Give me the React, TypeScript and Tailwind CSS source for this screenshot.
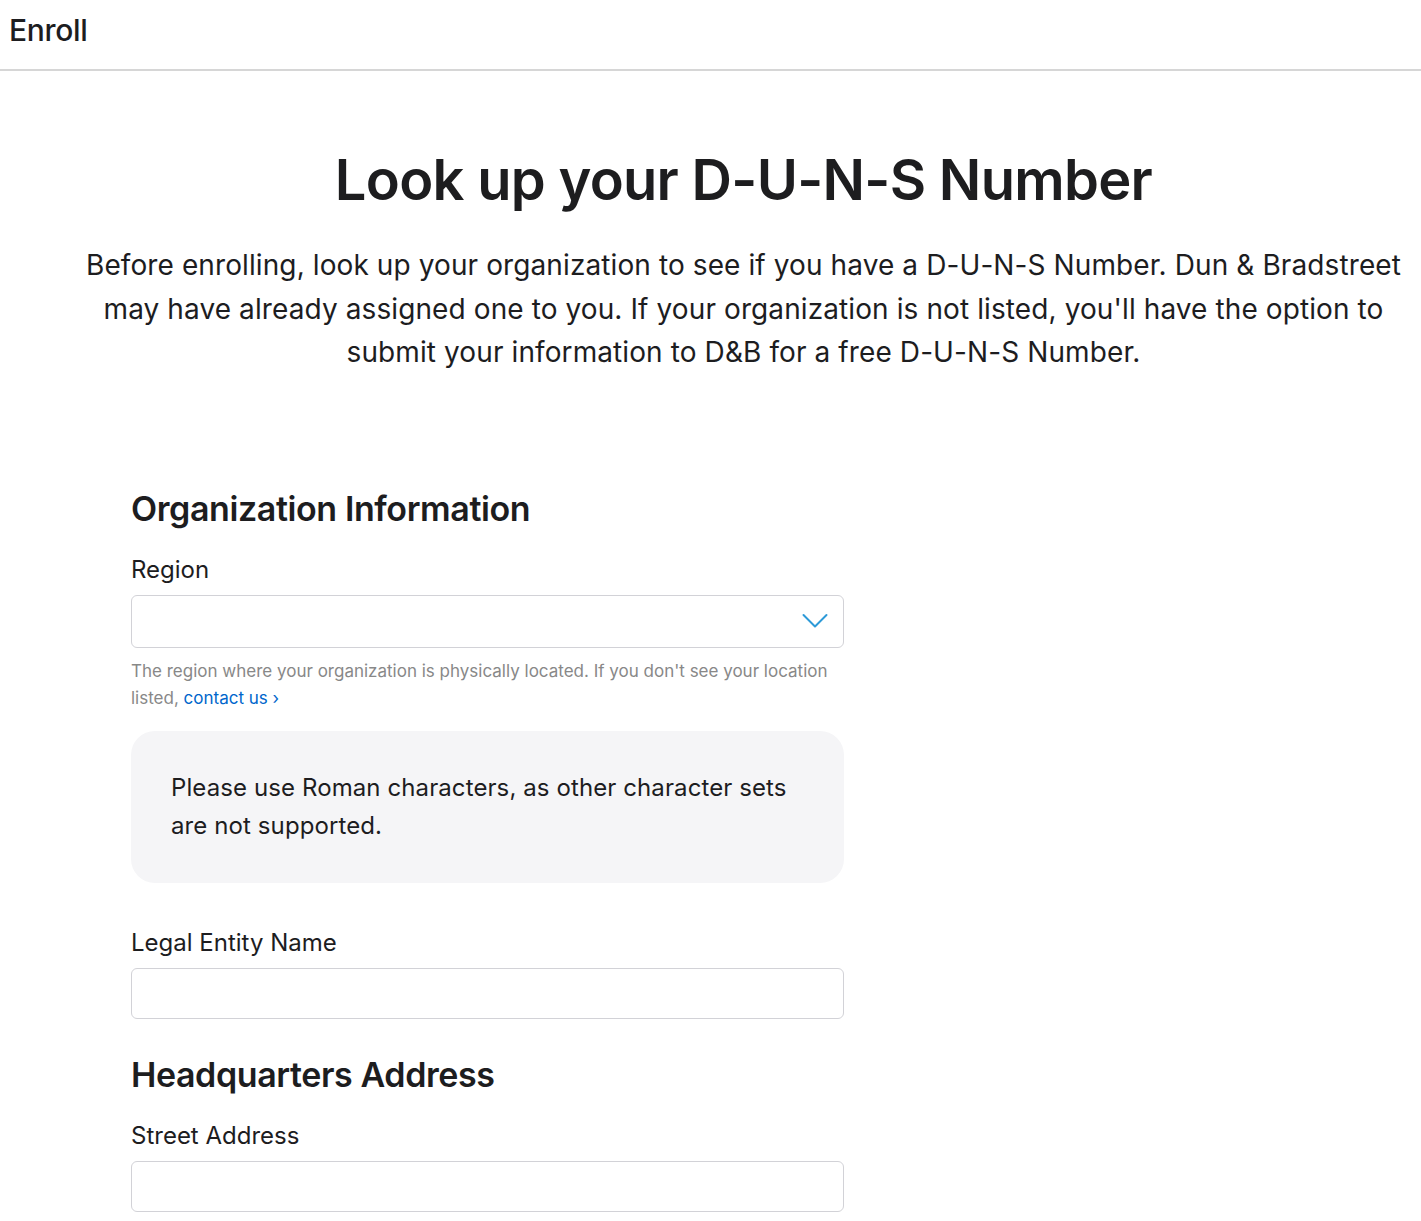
const font = { fontFamily: 'Inter, "Noto Sans", sans-serif' };

const Field = ({ label }: { label: string }) => (
  <div className="flex flex-col">
    <label className="text-[24px] leading-[32px] text-[#1d1d1f]">{label}</label>
    <input className="mt-[9px] h-[51px] w-full rounded-[6px] border border-[#d2d2d7] bg-white px-4 outline-none" />
  </div>
);

export default function App() {
  return (
    <div className="min-h-screen bg-white text-[#1d1d1f]" style={font}>
      <header className="flex h-[71px] items-center border-b-2 border-[#d6d6d6] pl-[9px] pb-[8px]">
        <span className="text-[30px] font-medium tracking-[-0.3px]">Enroll</span>
      </header>

      <main className="pl-[66px]">
        <section className="pt-[77px] text-center">
          <h1 className="text-[56px] leading-[64px] font-semibold tracking-[-0.7px]">
            Look up your D-U-N-S Number
          </h1>
          <p className="mt-[32px] text-[28px] leading-[43.5px] tracking-[0.1px]">
            Before enrolling, look up your organization to see if you have a D-U-N-S Number. Dun &amp; Bradstreet
            <br />
            may have already assigned one to you. If your organization is not listed, you'll have the option to
            <br />
            submit your information to D&amp;B for a free D-U-N-S Number.
          </p>
        </section>

        <form className="ml-[65px] mt-[113px] w-[713px] pb-2">
          <h2 className="text-[34px] leading-[42px] font-semibold tracking-[-0.4px]">Organization Information</h2>

          <div className="mt-[24px] flex flex-col">
            <label className="text-[24px] leading-[32px]">Region</label>
            <div className="mt-[9px] flex h-[53px] items-center justify-end rounded-[6px] border border-[#d2d2d7] bg-white pr-[15px]">
              <svg width="26" height="16" viewBox="0 0 26 16" fill="none" className="text-[#2d9ad8]">
                <polyline points="1.5,2 13,13.5 24.5,2" stroke="currentColor" strokeWidth="2" strokeLinecap="round" strokeLinejoin="round" />
              </svg>
            </div>
            <p className="mt-[10px] text-[17px] leading-[27px] text-[#888888]">
              The region where your organization is physically located. If you don't see your location listed,{' '}
              <span className="text-[#0066cc]">contact us ›</span>
            </p>
          </div>

          <div className="mt-[19px] rounded-[24px] bg-[#f5f5f7] px-[40px] py-[38px]">
            <p className="text-[24px] leading-[38px] tracking-[0.1px]">
              Please use Roman characters, as other character sets are not supported.
            </p>
          </div>

          <div className="mt-[44px]">
            <Field label="Legal Entity Name" />
          </div>

          <h2 className="mt-[35px] text-[34px] leading-[42px] font-semibold tracking-[-0.4px]">Headquarters Address</h2>

          <div className="mt-[24px]">
            <Field label="Street Address" />
          </div>
        </form>
      </main>
    </div>
  );
}
